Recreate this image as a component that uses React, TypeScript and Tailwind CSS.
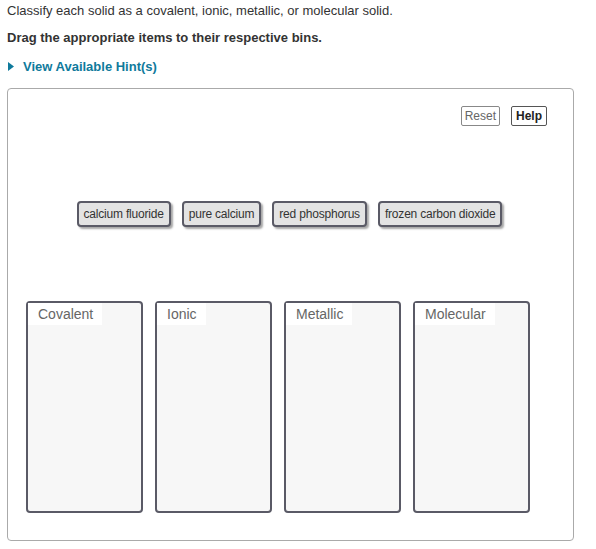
import React from 'react';

const items = ['calcium fluoride', 'pure calcium', 'red phosphorus', 'frozen carbon dioxide'];
const bins = ['Covalent', 'Ionic', 'Metallic', 'Molecular'];

const App: React.FC = () => {
  return (
    <div className="w-[596px] h-[549px] bg-white text-[#333] text-[13px] font-['Liberation_Sans',Arial,sans-serif] overflow-hidden">
      <div className="pl-[7px] pt-[3px]">
        <p className="leading-[15px]">Classify each solid as a covalent, ionic, metallic, or molecular solid.</p>
        <p className="mt-[12px] leading-[15px] font-bold">Drag the appropriate items to their respective bins.</p>
        <div className="mt-[14px] flex items-center text-[#0f7a9c] font-bold leading-[15px]">
          <svg width="6" height="9" viewBox="0 0 6 9" className="ml-[1px] mr-[9px]">
            <path d="M0 0 L6 4.5 L0 9 Z" fill="#0f7a9c" />
          </svg>
          <span>View Available Hint(s)</span>
        </div>
      </div>

      {/* Drag and drop panel */}
      <div className="ml-[7px] mt-[14px] w-[567px] h-[453px] border border-[#aaa] rounded-[4px] flex flex-col">
        <div className="flex justify-end gap-[11px] pt-[17px] pr-[26px] text-[12px]">
          <button className="h-[20px] px-[3px] border border-[#888] rounded-[2px] text-[#666] leading-[18px] bg-white">Reset</button>
          <button className="h-[20px] px-[4px] border border-[#555] rounded-[2px] text-[#222] font-bold leading-[18px] bg-white">Help</button>
        </div>

        <div className="flex justify-center gap-[11px] mt-[75px] pr-[2px]">
          {items.map(it => (
            <div key={it}
              className="h-[26px] px-[5px] flex items-center bg-[#e3e3e3] border-2 border-[#5a5a66] rounded-[4px] shadow-[2px_2px_2px_rgba(0,0,0,0.35)] text-[#333] text-[12px] tracking-[-0.2px]">
              {it}
            </div>
          ))}
        </div>

        <div className="flex gap-[12px] ml-[18px] mt-[74px]">
          {bins.map(b => (
            <div key={b} className="w-[117px] h-[212px] bg-[#f7f7f7] border-2 border-[#5a5a66] rounded-[4px]">
              <div className="inline-block bg-white pl-[10px] pr-[9px] h-[22px] leading-[22px] text-[14px] text-[#666]">
                {b}
              </div>
            </div>
          ))}
        </div>
      </div>
    </div>
  );
};

export default App;
